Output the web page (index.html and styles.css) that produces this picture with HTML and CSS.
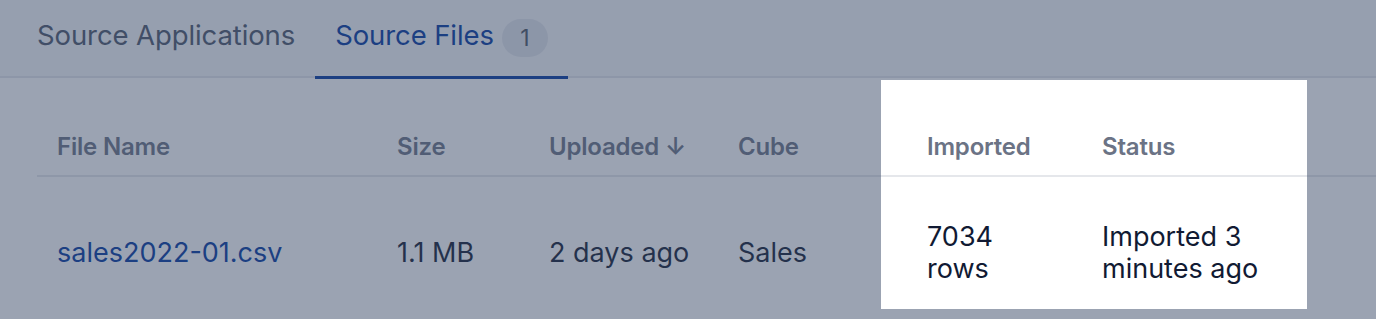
FILE: index.html
```html
<!DOCTYPE html>
<html lang="en">
<head>
<meta charset="utf-8">
<title>Source Files</title>
<link rel="stylesheet" href="styles.css">
</head>
<body>
<div class="page">
  <nav class="tabs">
    <a class="tab">Source Applications</a>
    <a class="tab active">Source Files <span class="badge">1</span></a>
  </nav>
  <div class="table-wrap">
    <table class="files">
      <colgroup>
        <col class="c-name"><col class="c-size"><col class="c-up"><col class="c-cube"><col class="c-imp"><col class="c-status"><col>
      </colgroup>
      <thead>
        <tr>
          <th>File Name</th>
          <th>Size</th>
          <th>Uploaded ↓</th>
          <th>Cube</th>
          <th>Imported</th>
          <th>Status</th>
          <th></th>
        </tr>
      </thead>
      <tbody>
        <tr>
          <td><a class="link">sales2022-01.csv</a></td>
          <td>1.1 MB</td>
          <td>2 days ago</td>
          <td>Sales</td>
          <td class="narrow">7034 rows</td>
          <td>Imported 3 minutes ago</td>
          <td></td>
        </tr>
      </tbody>
    </table>
  </div>
</div>
<div class="spotlight"></div>
</body>
</html>
```

FILE: styles.css
```css
html, body {
  margin: 0;
  padding: 0;
  background: #ffffff;
  overflow: hidden;
}
body {
  font-family: Inter, "Liberation Sans", sans-serif;
  color: #111a33;
  width: 1376px;
  height: 319px;
}
.page {
  width: 1376px;
  height: 319px;
  background: #ffffff;
}
.tabs {
  display: flex;
  height: 76px;
  padding-left: 17px;
  background: #f4f6f9;
  border-bottom: 2px solid #e2e5ea;
}
.tab {
  display: flex;
  align-items: center;
  gap: 8px;
  padding: 0 20px 6px;
  font-size: 27.5px;
  color: #4a5568;
  margin-bottom: -2px;
  border-bottom: 3px solid transparent;
  box-sizing: border-box;
  height: 79px;
  letter-spacing: -0.1px;
}
.tab.active {
  color: #00379f;
  border-bottom-color: #00379f;
}
.badge {
  display: inline-flex;
  align-items: center;
  justify-content: center;
  width: 46px;
  height: 38px;
  border-radius: 19px;
  background: #e1e4ea;
  color: #4b5563;
  font-size: 23px;
  margin-top: 6px;
}
.table-wrap {
  padding-left: 37px;
  padding-top: 28px;
}
.files {
  border-collapse: collapse;
  width: 1339px;
  table-layout: fixed;
}
.c-name { width: 340px; }
.c-size { width: 152px; }
.c-up { width: 189px; }
.c-cube { width: 189px; }
.c-imp { width: 175px; }
.c-status { width: 199px; }
.files th {
  text-align: left;
  font-weight: 600;
  font-size: 24px;
  color: #6b7385;
  height: 70px;
  padding: 12px 20px 0;
  border-bottom: 2px solid #e5e7eb;
  vertical-align: middle;
  box-sizing: border-box;
  letter-spacing: -0.2px;
}
.files td {
  font-size: 27px;
  line-height: 32px;
  color: #111a33;
  padding: 44px 20px;
  vertical-align: middle;
}
.files td.narrow {
  padding-right: 60px;
}
.link {
  color: #00379f;
}
.spotlight {
  position: absolute;
  left: 881px;
  top: 80px;
  width: 426px;
  height: 229px;
  box-shadow: 0 0 0 3000px rgba(55, 71, 101, 0.5);
  pointer-events: none;
}
```
